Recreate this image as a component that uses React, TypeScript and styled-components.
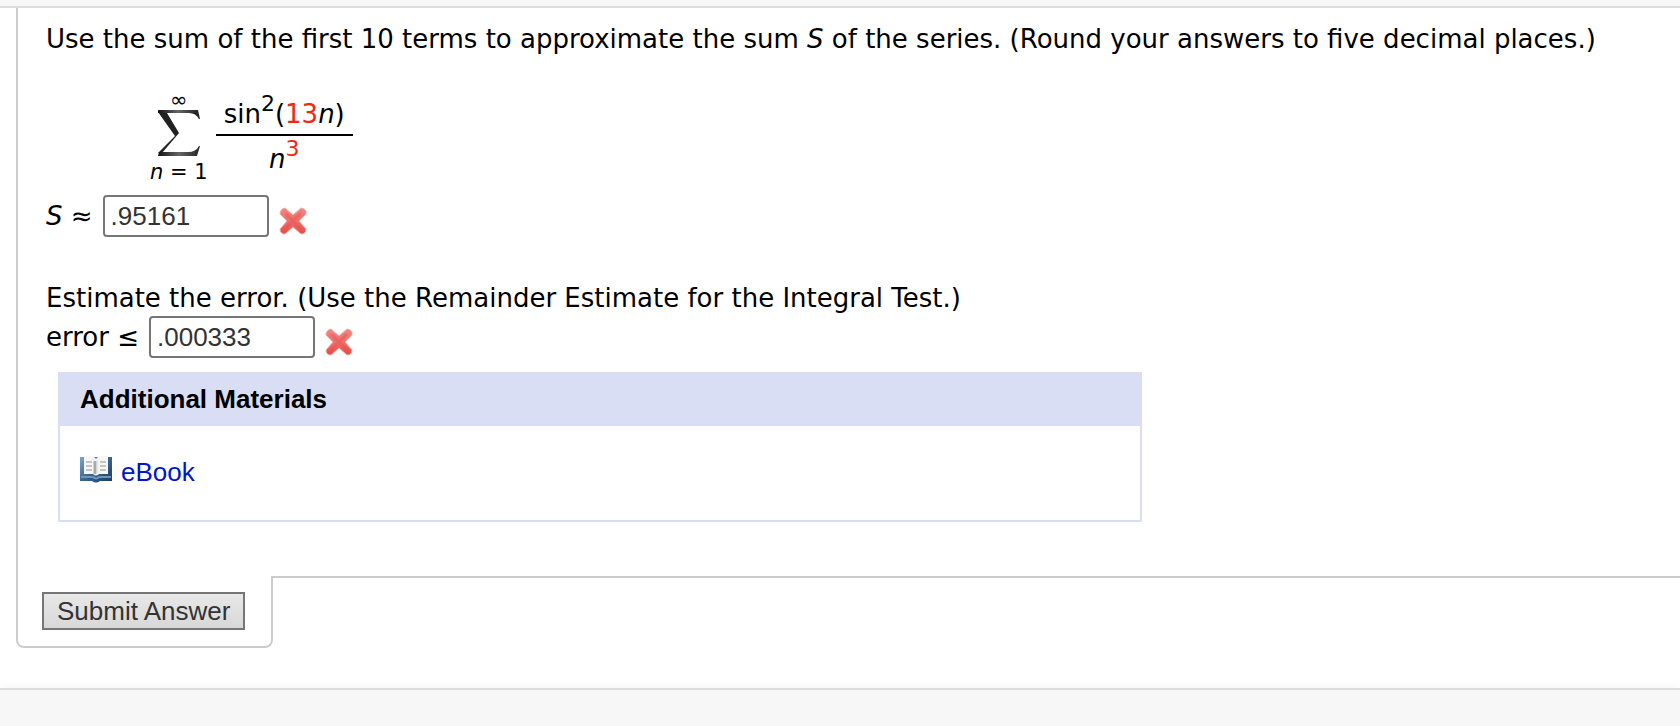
import React, { useState } from "react";
import styled, { createGlobalStyle } from "styled-components";

const GlobalStyle = createGlobalStyle`
  * { box-sizing: border-box; }
  body {
    margin: 0;
    background: #fff;
    color: #000;
    font-family: Verdana, "DejaVu Sans", sans-serif;
    font-size: 26px;
    line-height: 32px;
  }
`;

const Page = styled.div`
  display: flex;
  flex-direction: column;
  min-height: 100vh;
`;

const TopBar = styled.header`
  height: 8px;
  background: #f7f7f7;
  border-bottom: 2px solid #ddd;
`;

const BottomBar = styled.footer`
  flex: 1;
  min-height: 38px;
  margin-top: 40px;
  background: #f7f7f7;
  border-top: 2px solid #ddd;
  box-shadow: 0 -2px 8px rgba(0, 0, 0, 0.04);
`;

const Question = styled.main`
  margin-left: 16px;
  border-left: 2px solid #ccc;
  padding: 15px 28px 54px;
`;

const Prompt = styled.p`
  margin: 0 0 2px;
`;

const Series = styled.div`
  display: flex;
  align-items: flex-start;
  gap: 8px;
  margin: 35px 0 12px 104px;
`;

const Summation = styled.div`
  display: flex;
  flex-direction: column;
  align-items: center;
  font-size: 21px;
  line-height: 20px;
`;

const SigmaIcon = styled.svg`
  display: block;
  width: 42px;
  height: 46px;
  margin: 0 0 6px;
`;

const Fraction = styled.div`
  display: flex;
  flex-direction: column;
  align-items: center;
  font-size: 26px;
  line-height: 47px;
`;

const Numerator = styled.div`
  padding: 4px 8px 0;
  border-bottom: 2px solid #000;
  line-height: 40px;
`;

const Power = styled.sup`
  font-size: 22px;
  line-height: 0;
  vertical-align: 12px;
`;

const Random = styled.span`
  color: #f22613;
`;

const AnswerRow = styled.div<{ $spaced?: boolean }>`
  display: flex;
  align-items: center;
  gap: 10px;
  margin-bottom: ${(p) => (p.$spaced ? 45 : 14)}px;
`;

const AnswerLabel = styled.label`
  display: flex;
  align-items: center;
  gap: 10px;
`;

const AnswerInput = styled.input`
  width: 166px;
  height: 42px;
  padding: 0 6px;
  border: 2px solid #767676;
  border-radius: 4px;
  background: #fff;
  color: #333;
  font: 26px Arial, "Liberation Sans", sans-serif;
`;

const WrongIcon = styled.svg`
  width: 28px;
  height: 28px;
  margin-top: 9px;
`;

const Materials = styled.section`
  width: calc(100% - 12px);
  max-width: 1084px;
  margin-left: 12px;
  border: 2px solid #d9def4;
  font-family: Arial, "Liberation Sans", sans-serif;
`;

const MaterialsTitle = styled.h2`
  margin: 0;
  padding: 9px 20px 11px;
  background: #d9def4;
  font-size: 26px;
  line-height: 32px;
`;

const MaterialsBody = styled.div`
  padding: 29px 20px 31px;
`;

const BookLink = styled.a`
  display: flex;
  align-items: center;
  gap: 9px;
  width: fit-content;
  color: #0016c8;
  text-decoration: none;
`;

const BookIcon = styled.svg`
  width: 32px;
  height: 28px;
  margin-bottom: 6px;
`;

const SubmitRow = styled.div`
  display: flex;
  margin-left: 16px;
`;

const SubmitTab = styled.div`
  padding: 16px 26px 16px 24px;
  border: 2px solid #ccc;
  border-top: 0;
  border-radius: 0 0 8px 8px;
`;

const SubmitRule = styled.div`
  flex: 1;
  border-top: 2px solid #ccc;
`;

const SubmitButton = styled.button`
  display: block;
  height: 38px;
  padding: 0 13px;
  border: 2px solid #767676;
  border-radius: 0;
  background: linear-gradient(#e8e8e8, #d8d8d8);
  color: #333;
  font: 26px/32px Arial, "Liberation Sans", sans-serif;
`;

function Sigma() {
  return (
    <SigmaIcon viewBox="0 0 42 46" role="img" aria-label="sum">
      <defs>
        <linearGradient id="bar" x1="0" y1="0" x2="1" y2="0">
          <stop offset="0" stopColor="#111" />
          <stop offset="0.5" stopColor="#666" />
          <stop offset="1" stopColor="#222" />
        </linearGradient>
      </defs>
      <path d="M0 0H40L42 9H41Q38 3 31 3H9L21 23L4 43H0L17 26L0 2Z" fill="#222" />
      <path d="M0 0H40V3H0Z" fill="url(#bar)" />
      <path d="M1 42H30Q38 42 41 36H42L39 46H0Z" fill="url(#bar)" />
    </SigmaIcon>
  );
}

function Wrong({ id }: { id: string }) {
  return (
    <WrongIcon viewBox="0 0 28 28" role="img" aria-label="Incorrect">
      <defs>
        <linearGradient id={id} x1="0" y1="0" x2="0" y2="1">
          <stop offset="0" stopColor="#f28783" />
          <stop offset="0.6" stopColor="#ec6a66" />
          <stop offset="1" stopColor="#e34a43" />
        </linearGradient>
      </defs>
      <path
        d="M6 1L14 8L22 1Q28 2 27 7L20 14L27 22Q27 27 22 27L14 20L6 27Q1 27 1 22L8 14L1 7Q1 2 6 1Z"
        fill={`url(#${id})`}
        stroke="#f6aaa6"
        strokeWidth="1"
        strokeLinejoin="round"
      />
      <path d="M7 7L21 21M21 7L7 21" stroke="#e64f4b" strokeWidth="3" strokeLinecap="round" opacity="0.4" />
    </WrongIcon>
  );
}

function Book() {
  return (
    <BookIcon viewBox="0 0 32 28" aria-hidden="true">
      <defs>
        <linearGradient id="cover" x1="0" y1="0" x2="1" y2="1">
          <stop offset="0" stopColor="#7fa6c9" />
          <stop offset="0.5" stopColor="#39648f" />
          <stop offset="1" stopColor="#173d66" />
        </linearGradient>
      </defs>
      <path d="M0 2H32V26H20Q16 29 12 26H0Z" fill="url(#cover)" />
      <path d="M1 22H13Q16 25 19 22H31" fill="none" stroke="#6c96ba" strokeWidth="2" />
      <path d="M4 1H13L16 4L19 1H28V19H19Q16 22 13 19H4Z" fill="#f6f6f4" />
      <path d="M6 7H12M6 11H12M6 15H12M20 7H26M20 11H26M20 15H26" stroke="#c5c5c5" strokeWidth="2" />
      <path d="M15 6V19" stroke="#aaa" strokeWidth="3" />
      <path d="M17 5V19" stroke="#ddd" strokeWidth="1" />
    </BookIcon>
  );
}

export default function App() {
  const [sum, setSum] = useState(".95161");
  const [error, setError] = useState(".000333");

  return (
    <>
      <GlobalStyle />
      <Page>
        <TopBar />
        <Question>
          <Prompt>
            Use the sum of the first 10 terms to approximate the sum <i>S</i> of the series. (Round your answers to
            five decimal places.)
          </Prompt>
          <Series>
            <Summation>
              <span>∞</span>
              <Sigma />
              <span>
                <i>n</i> = 1
              </span>
            </Summation>
            <Fraction>
              <Numerator>
                sin<Power>2</Power>(<Random>13</Random>
                <i>n</i>)
              </Numerator>
              <div>
                <i>n</i>
                <Power>
                  <Random>3</Random>
                </Power>
              </div>
            </Fraction>
          </Series>
          <AnswerRow $spaced>
            <AnswerLabel>
              <span>
                <i>S</i> ≈
              </span>
              <AnswerInput type="text" value={sum} onChange={(e) => setSum(e.target.value)} />
            </AnswerLabel>
            <Wrong id="wrong-sum" />
          </AnswerRow>
          <Prompt>Estimate the error. (Use the Remainder Estimate for the Integral Test.)</Prompt>
          <AnswerRow>
            <AnswerLabel>
              <span>error ≤</span>
              <AnswerInput type="text" value={error} onChange={(e) => setError(e.target.value)} />
            </AnswerLabel>
            <Wrong id="wrong-error" />
          </AnswerRow>
          <Materials>
            <MaterialsTitle>Additional Materials</MaterialsTitle>
            <MaterialsBody>
              <BookLink href="#ebook">
                <Book />
                eBook
              </BookLink>
            </MaterialsBody>
          </Materials>
        </Question>
        <SubmitRow>
          <SubmitTab>
            <SubmitButton type="button">Submit Answer</SubmitButton>
          </SubmitTab>
          <SubmitRule />
        </SubmitRow>
        <BottomBar />
      </Page>
    </>
  );
}
